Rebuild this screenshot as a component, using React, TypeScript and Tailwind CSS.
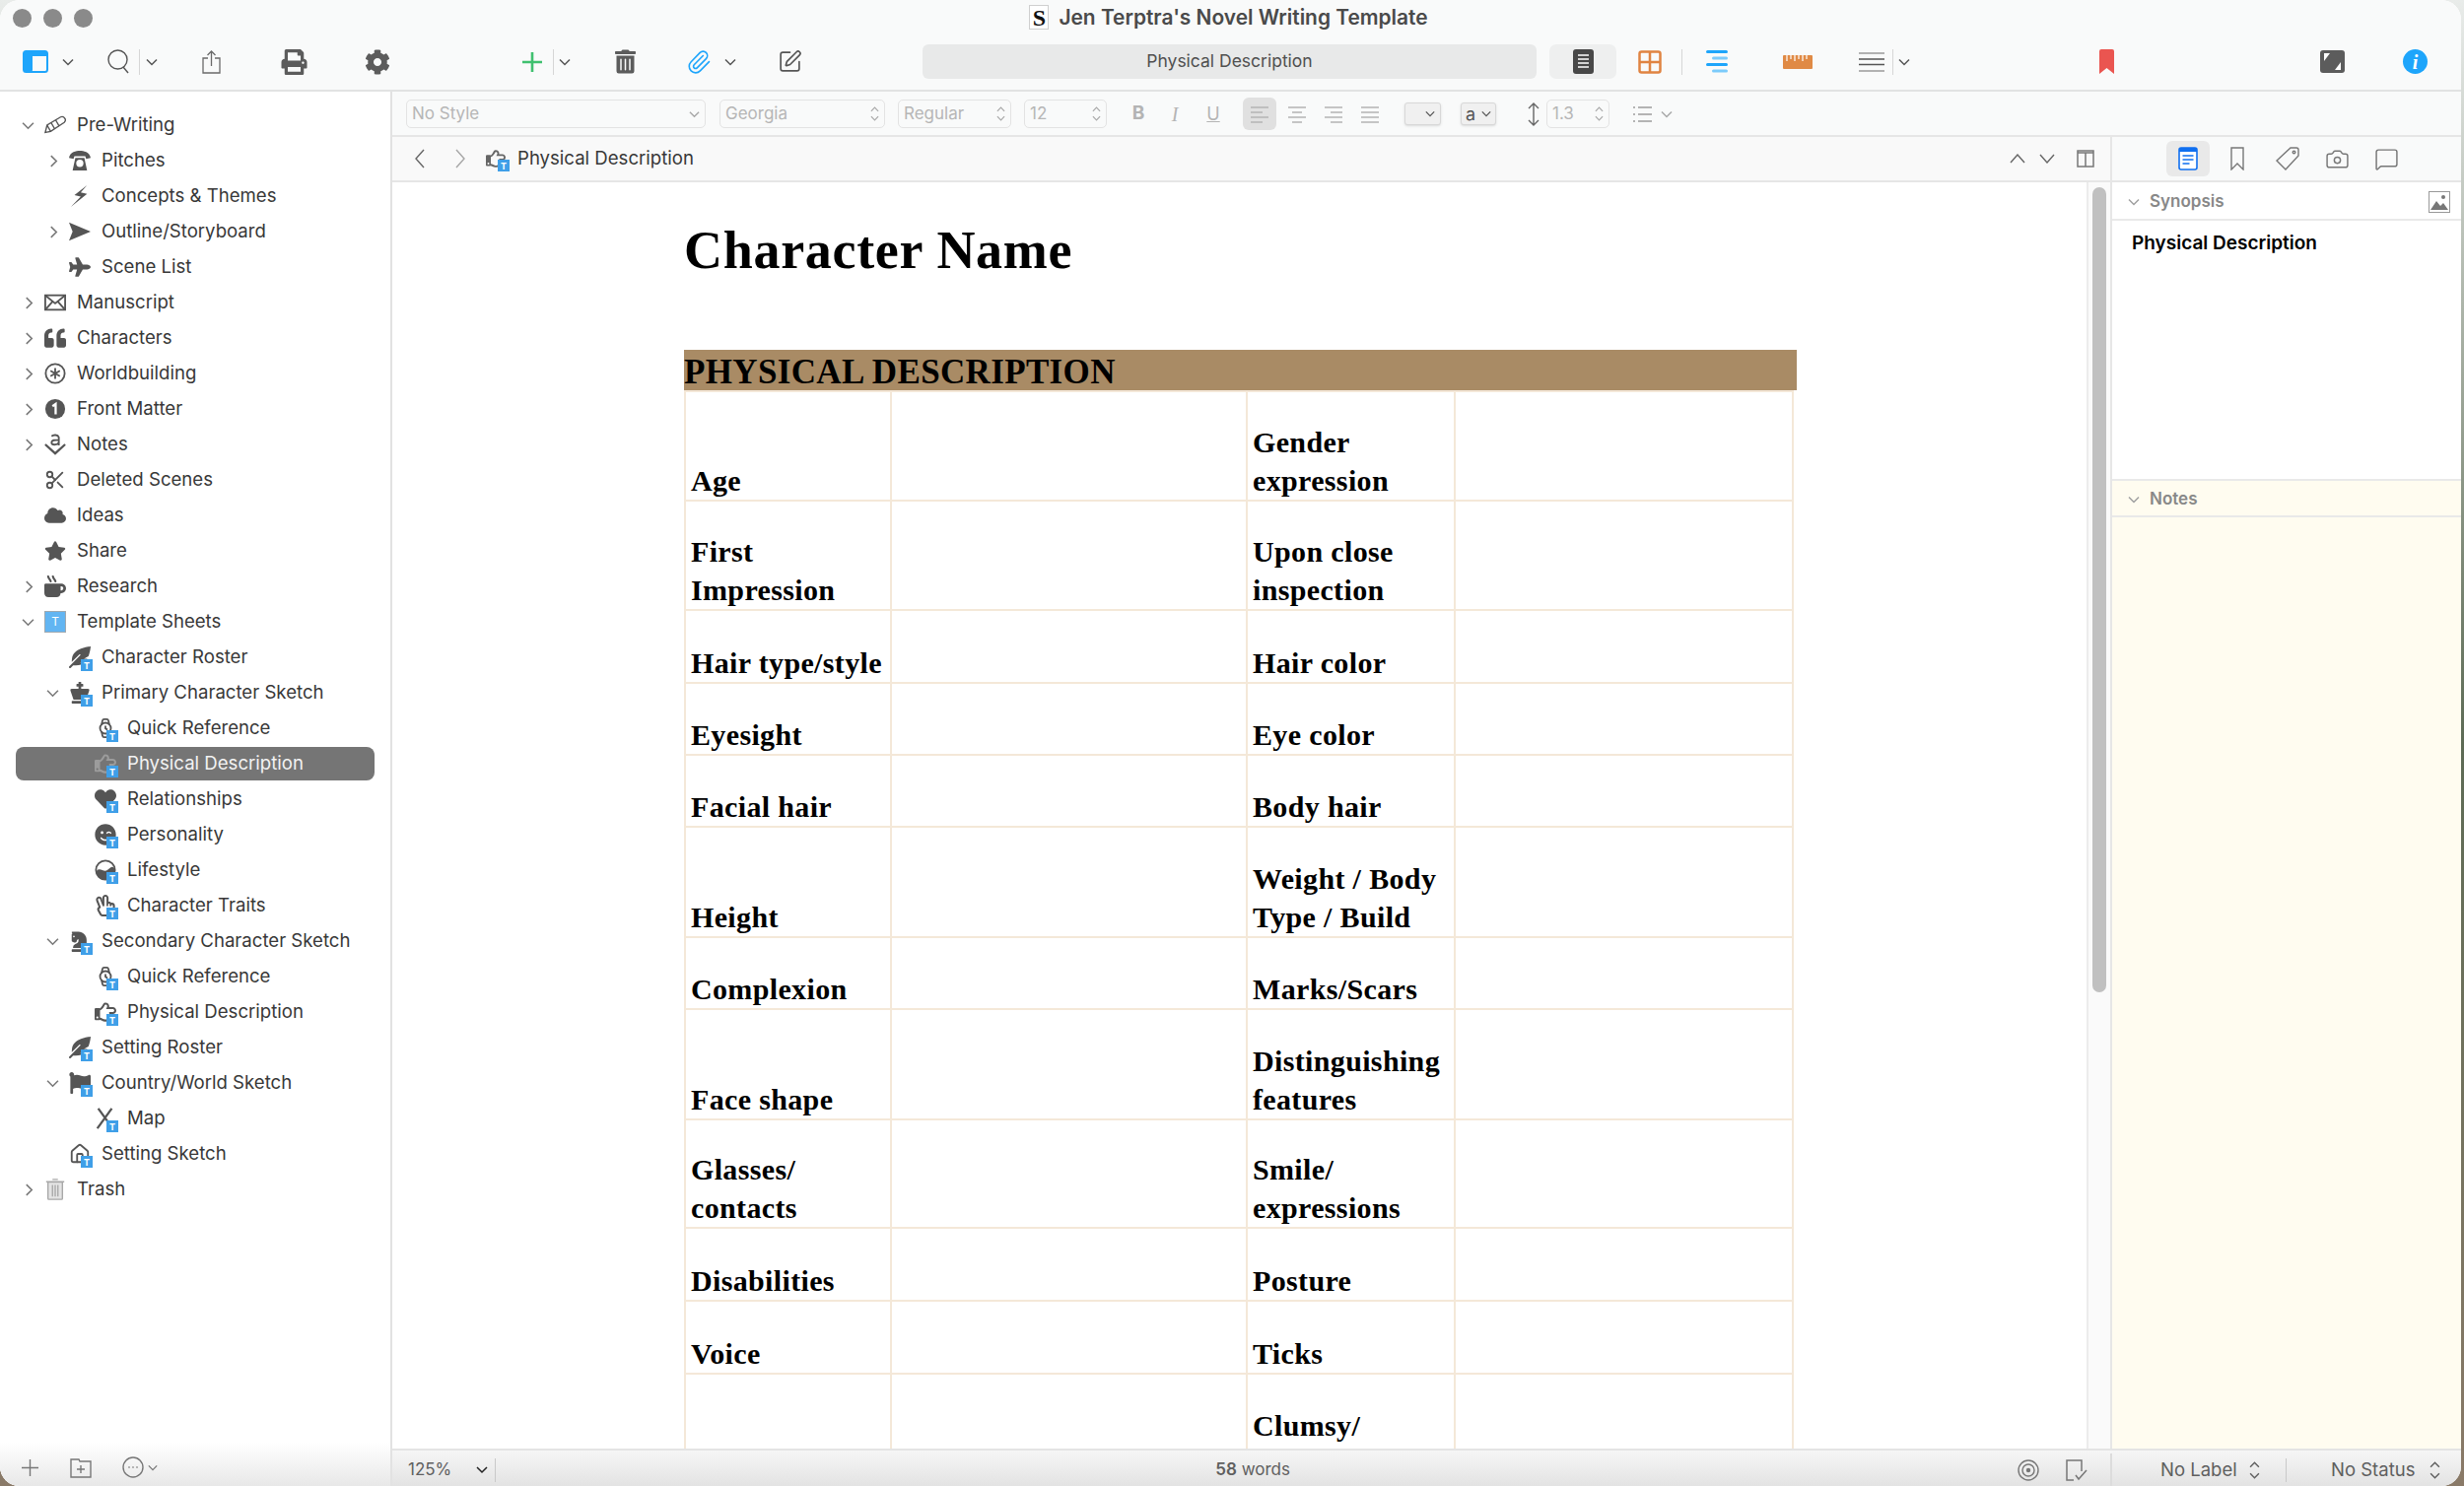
import React from 'react';
import { Scissors, Watch, House, Paperclip, SquarePen, Camera, MessageSquare } from 'lucide-react';
import { FaPlane, FaQuoteLeft, FaCloud, FaStar, FaMugHot, FaFeatherAlt, FaChessKing, FaRegHandPointRight, FaHeart, FaSmileWink, FaRegHandPeace, FaChessKnight, FaFlag, FaPrint, FaCog, FaTrashAlt } from 'react-icons/fa';

type Ic = { className?: string };

const Pencil = ({ className }: Ic) => (
  <svg viewBox="0 0 24 24" className={className} fill="none" stroke="currentColor" strokeWidth="1.500">
    <path d="M1 20l2-8L18 3c2-1 4 0 5 2s0 3-1 4L7 19z" />
    <path d="M3 12l4 7M7.500 9.300l4 7M12.500 6.300l4 7" />
  </svg>
);
const Phone = ({ className }: Ic) => (
  <svg viewBox="0 0 24 24" className={className} fill="currentColor">
    <path d="M0 9C1 2 8 1 12 1s11 1 12 8l-5 1-1-3H6l-1 3z" />
    <path fillRule="evenodd" d="M7 9h10l3 14H4zM12 11a4 4 0 100 8 4 4 0 000-8z" />
  </svg>
);
const Bolt = ({ className }: Ic) => (
  <svg viewBox="0 0 24 24" className={className} fill="currentColor">
    <path d="M20 0L6 11l7 1.500L2 24l18-14.500-7-1.500z" />
  </svg>
);
const Plane = ({ className }: Ic) => (
  <svg viewBox="0 0 24 24" className={className} fill="currentColor">
    <path d="M0 2l24 10L0 22l4-10z" />
  </svg>
);
const Mail = ({ className }: Ic) => (
  <svg viewBox="0 0 24 24" className={className} fill="none" stroke="currentColor" strokeWidth="2">
    <rect x="1" y="4" width="22" height="16" />
    <path d="M1 4l11 9 11-9M1 20l8-9M23 20l-8-9" />
  </svg>
);
const Asterisk = ({ className }: Ic) => (
  <svg viewBox="0 0 24 24" className={className} fill="none" stroke="currentColor" strokeWidth="2">
    <circle cx="12" cy="12" r="10.500" />
    <path d="M12 6v12M6.800 9l10.400 6M17.200 9L6.800 15" />
  </svg>
);
const One = ({ className }: Ic) => (
  <svg viewBox="0 0 24 24" className={className}>
    <circle cx="12" cy="12" r="11" fill="currentColor" />
    <path d="M9 9l3.500-2.500V18" fill="none" stroke="#fff" strokeWidth="2.500" />
  </svg>
);
const NotesA = ({ className }: Ic) => (
  <svg viewBox="0 0 24 24" className={className} fill="none" stroke="currentColor" strokeWidth="2">
    <path d="M8 3c2-2 7-2 8 1v9M16 7c-4 0-8 0-8 3s6 3 8 0" />
    <path d="M1 12l11 10 11-10" strokeWidth="2.500" />
  </svg>
);
const Yin = ({ className }: Ic) => (
  <svg viewBox="0 0 24 24" className={className}>
    <circle cx="12" cy="12" r="10.500" fill="none" stroke="currentColor" strokeWidth="2" />
    <path d="M2 13c4-5 8 2 12-1s5-5 8-2c1 6-4 13-10 13S2 19 2 13z" fill="currentColor" />
  </svg>
);
const MapX = ({ className }: Ic) => (
  <svg viewBox="0 0 24 24" className={className} fill="none" stroke="currentColor" strokeWidth="2.500">
    <path d="M4 1l16 22M19 1L3 23" />
  </svg>
);
const Bin = ({ className }: Ic) => (
  <svg viewBox="0 0 24 24" className={className} fill="none" stroke="#a8a8a8" strokeWidth="1.500">
    <rect x="4" y="4" width="16" height="19" rx="1" fill="#e4e4e4" />
    <path d="M2 3.500h20M9 1h6M9 7v13M12 7v13M15 7v13" />
  </svg>
);

const icons: Record<string, React.FC<Ic>> = {
  pencil: Pencil, phone: Phone, bolt: Bolt, plane: Plane, jet: FaPlane, mail: Mail, quote: FaQuoteLeft, star8: Asterisk,
  one: One, notes: NotesA, cut: Scissors, cloud: FaCloud, star: FaStar, mug: FaMugHot, quill: FaFeatherAlt, king: FaChessKing,
  watch: Watch, hand: FaRegHandPointRight, heart: FaHeart, smile: FaSmileWink, yin: Yin, peace: FaRegHandPeace, knight: FaChessKnight,
  flag: FaFlag, mapx: MapX, house: House, bin: Bin,
};

const Badge = () => (
  <span className="absolute right-[-2px] bottom-[-3px] flex h-[12px] w-[12px] items-center justify-center bg-[#3f9fe8] text-[9px] leading-none font-bold text-white">T</span>
);

// plain chevrons, the lucide ones sit too small in their box
const Down = ({ className }: Ic) => (
  <svg viewBox="0 0 12 8" className={`flex-none ${className ?? ''}`} fill="none" stroke="currentColor" strokeWidth="1.500">
    <path d="M1 1.500l5 5 5-5" />
  </svg>
);
const Right = ({ className }: Ic) => (
  <svg viewBox="0 0 8 12" className={`flex-none ${className ?? ''}`} fill="none" stroke="currentColor" strokeWidth="1.500">
    <path d="M1.500 1l5 5-5 5" />
  </svg>
);
const UpDown = ({ className }: Ic) => (
  <svg viewBox="0 0 10 18" className={`flex-none ${className ?? ''}`} fill="none" stroke="currentColor" strokeWidth="1.300">
    <path d="M1 6l4-4 4 4M1 12l4 4 4-4" />
  </svg>
);

type Row = { label: string; icon: string; level: 0 | 1 | 2; arrow?: 'open' | 'closed'; badge?: boolean; selected?: boolean };

const rows: Row[] = [
  { label: 'Pre-Writing', icon: 'pencil', level: 0, arrow: 'open' },
  { label: 'Pitches', icon: 'phone', level: 1, arrow: 'closed' },
  { label: 'Concepts & Themes', icon: 'bolt', level: 1 },
  { label: 'Outline/Storyboard', icon: 'plane', level: 1, arrow: 'closed' },
  { label: 'Scene List', icon: 'jet', level: 1 },
  { label: 'Manuscript', icon: 'mail', level: 0, arrow: 'closed' },
  { label: 'Characters', icon: 'quote', level: 0, arrow: 'closed' },
  { label: 'Worldbuilding', icon: 'star8', level: 0, arrow: 'closed' },
  { label: 'Front Matter', icon: 'one', level: 0, arrow: 'closed' },
  { label: 'Notes', icon: 'notes', level: 0, arrow: 'closed' },
  { label: 'Deleted Scenes', icon: 'cut', level: 0 },
  { label: 'Ideas', icon: 'cloud', level: 0 },
  { label: 'Share', icon: 'star', level: 0 },
  { label: 'Research', icon: 'mug', level: 0, arrow: 'closed' },
  { label: 'Template Sheets', icon: 'template', level: 0, arrow: 'open' },
  { label: 'Character Roster', icon: 'quill', level: 1, badge: true },
  { label: 'Primary Character Sketch', icon: 'king', level: 1, arrow: 'open', badge: true },
  { label: 'Quick Reference', icon: 'watch', level: 2, badge: true },
  { label: 'Physical Description', icon: 'hand', level: 2, badge: true, selected: true },
  { label: 'Relationships', icon: 'heart', level: 2, badge: true },
  { label: 'Personality', icon: 'smile', level: 2, badge: true },
  { label: 'Lifestyle', icon: 'yin', level: 2, badge: true },
  { label: 'Character Traits', icon: 'peace', level: 2, badge: true },
  { label: 'Secondary Character Sketch', icon: 'knight', level: 1, arrow: 'open', badge: true },
  { label: 'Quick Reference', icon: 'watch', level: 2, badge: true },
  { label: 'Physical Description', icon: 'hand', level: 2, badge: true },
  { label: 'Setting Roster', icon: 'quill', level: 1, badge: true },
  { label: 'Country/World Sketch', icon: 'flag', level: 1, arrow: 'open', badge: true },
  { label: 'Map', icon: 'mapx', level: 2, badge: true },
  { label: 'Setting Sketch', icon: 'house', level: 1, badge: true },
  { label: 'Trash', icon: 'bin', level: 0, arrow: 'closed' },
];

const indent = ['pl-[22px]', 'pl-[47px]', 'pl-[71px]'];

const BinderRow = ({ row }: { row: Row }) => {
  const Icon = icons[row.icon];
  return (
    <div className={`relative flex h-9 items-center ${indent[row.level]}`}>
      {row.selected && <div className="absolute top-[1px] right-[16px] bottom-[1px] left-[16px] rounded-[8px] bg-[#757575]" />}
      <div className={`relative text-[#7a7a7a] ${row.level === 2 ? 'w-[25px]' : 'w-[23px]'}`}>
        {row.arrow === 'open' && <Down className="h-[9px] w-[13px]" />}
        {row.arrow === 'closed' && <Right className="ml-[3px] h-[13px] w-[9px]" />}
      </div>
      <div className="relative w-[33px]">
        {row.icon === 'template' ? (
          <span className="flex h-[22px] w-[22px] items-center justify-center border border-[#9fa9b0] bg-[#62b5f2] text-[12px] leading-none text-white">T</span>
        ) : (
          <span className={`relative block h-[22px] w-[22px] ${row.selected ? 'text-[#9c9c9c]' : 'text-[#555555]'}`}>
            <Icon className="h-[22px] w-[22px]" />
            {row.badge && <Badge />}
          </span>
        )}
      </div>
      <span className={`relative text-[18.600px] whitespace-nowrap ${row.selected ? 'text-[#f2f2f2]' : 'text-[#383838]'}`}>{row.label}</span>
    </div>
  );
};

const Chev = ({ className }: Ic) => <Down className={`h-[8px] w-[12px] text-[#555555] ${className ?? ''}`} />;
const Divider = ({ className }: Ic) => <div className={`h-[26px] w-px flex-none bg-[#d6d6d6] ${className ?? ''}`} />;

const TopBar = () => (
  <div className="h-[93px] flex-none border-b-2 border-[#e2e3e3] bg-[#f9fafa]">
    <div className="relative flex h-9 items-center justify-center">
      <div className="absolute top-[9px] left-[13px] flex gap-[12px]">
        <span className="h-[19px] w-[19px] rounded-full bg-[#8a8a8a]" />
        <span className="h-[19px] w-[19px] rounded-full bg-[#8a8a8a]" />
        <span className="h-[19px] w-[19px] rounded-full bg-[#8a8a8a]" />
      </div>
      <div className="flex items-center gap-[10px] pr-[4px]">
        <div className="flex h-[25px] w-[20px] items-center justify-center border border-[#cfcfcf] bg-white font-['Liberation_Serif',serif] text-[24px] leading-none font-bold text-[#111111]">S</div>
        <span className="text-[20.900px] font-semibold text-[#4a4a4a]">Jen Terptra's Novel Writing Template</span>
      </div>
    </div>
    <div className="flex h-[52px] items-center pt-[1px] pl-[23px]">
      <svg viewBox="0 0 26 23" className="h-[23px] w-[26px] flex-none">
        <rect x="1" y="1" width="24" height="21" rx="2.500" fill="none" stroke="#1ea5fb" strokeWidth="2" />
        <path d="M1 3.500a2.500 2.500 0 012.500-2.500h19a2.500 2.500 0 012.500 2.500V6H1z" fill="#1ea5fb" />
        <rect x="1" y="1" width="9" height="21" rx="2" fill="#1ea5fb" />
      </svg>
      <Chev className="ml-[14px]" />
      <svg viewBox="0 0 23 25" className="ml-[34px] h-[25px] w-[23px] flex-none" fill="none" stroke="#555555" strokeWidth="1.400">
        <circle cx="10.500" cy="10.500" r="9.500" />
        <path d="M16 18l5 6" />
      </svg>
      <Divider className="ml-[9px]" />
      <Chev className="ml-[6px]" />
      <svg viewBox="0 0 19 24" className="ml-[45px] h-[24px] w-[19px] flex-none" fill="none" stroke="#6a6a6a" strokeWidth="1.300">
        <path d="M6 8H1v15h17V8h-5M9.500 16V1M5.500 5l4-4 4 4" />
      </svg>
      <FaPrint className="ml-[61px] h-[26px] w-[27px] flex-none text-[#5c5c5c]" />
      <FaCog className="ml-[58px] h-[26px] w-[26px] flex-none text-[#5c5c5c]" />
      <svg viewBox="0 0 20 20" className="ml-[134px] h-[20px] w-[20px] flex-none" fill="none" stroke="#3fc06f" strokeWidth="2.600">
        <path d="M10 0v20M0 10h20" />
      </svg>
      <Divider className="ml-[11px]" />
      <Chev className="ml-[5px]" />
      <FaTrashAlt className="ml-[45px] h-[25px] w-[21px] flex-none text-[#5c5c5c]" />
      <Paperclip size={26} strokeWidth={1.5} className="ml-[51px] flex-none text-[#1ea5fb]" />
      <Chev className="ml-[13px]" />
      <SquarePen size={25} strokeWidth={1.6} className="ml-[42px] flex-none text-[#555555]" />
      <div className="ml-[122px] flex h-[35px] w-[623px] flex-none items-center justify-center rounded-[6px] bg-[#e8e9e9] text-[17.500px] text-[#505050]">Physical Description</div>
      <div className="ml-[13px] flex h-[35px] w-[68px] flex-none items-center justify-center rounded-[7px] bg-[#eeefef]">
        <svg viewBox="0 0 21 25" className="h-[25px] w-[21px]">
          <rect width="21" height="25" rx="3" fill="#484848" />
          <path d="M5 6h11M5 10h11M5 14h11M5 18h11" stroke="#fff" strokeWidth="1.500" />
        </svg>
      </div>
      <svg viewBox="0 0 24 24" className="ml-[22px] h-[24px] w-[24px] flex-none" fill="none" stroke="#e08442" strokeWidth="2.500">
        <rect x="1.500" y="1.500" width="21" height="21" rx="2" />
        <path d="M12 1.500v21M1.500 12h21" />
      </svg>
      <Divider className="ml-[20px]" />
      <svg viewBox="0 0 22 25" className="ml-[24px] h-[25px] w-[22px] flex-none">
        <rect x="0" y="1" width="22" height="3" rx="1.500" fill="#1ea5fb" />
        <rect x="6" y="7.500" width="16" height="3" rx="1.500" fill="#7ccbfb" />
        <rect x="0" y="14" width="22" height="3" rx="1.500" fill="#1ea5fb" />
        <rect x="6" y="20.500" width="16" height="3" rx="1.500" fill="#7ccbfb" />
      </svg>
      <svg viewBox="0 0 30 14" className="ml-[56px] h-[14px] w-[30px] flex-none">
        <rect width="30" height="14" rx="1" fill="#e08a45" />
        <path d="M4 0v6M8 0v4M12 0v6M16 0v4M20 0v6M24 0v4" stroke="#fff" strokeWidth="1.200" />
      </svg>
      <svg viewBox="0 0 28 20" className="ml-[46px] h-[20px] w-[28px] flex-none">
        <path d="M1 1h26M1 19h26" stroke="#9a9a9a" strokeWidth="1.500" />
        <path d="M1 7h26M1 12.500h26" stroke="#555555" strokeWidth="1.500" />
      </svg>
      <Divider className="ml-[7px]" />
      <Chev className="ml-[5px]" />
      <svg viewBox="0 0 15 25" className="ml-[192px] h-[25px] w-[15px] flex-none">
        <path d="M0 2a2 2 0 012-2h11a2 2 0 012 2v23l-7.500-6L0 25z" fill="#ea5550" />
      </svg>
      <svg viewBox="0 0 25 23" className="ml-[209px] h-[23px] w-[25px] flex-none">
        <rect width="25" height="23" rx="3" fill="#5c5c5c" />
        <path d="M4 3h6l-6 8zM21 20h-6l6-8z" fill="#fff" />
      </svg>
      <div className="ml-[59px] flex h-[25px] w-[25px] flex-none items-center justify-center rounded-full bg-[#1ea5fb] font-['Liberation_Serif',serif] text-[20px] leading-none font-bold text-white italic">i</div>
    </div>
  </div>
);

const Sel = ({ label, className, arrows }: { label: string; className: string; arrows?: boolean }) => (
  <div className={`flex h-[29px] flex-none items-center justify-between rounded-[5px] border border-[#e3e3e3] px-[5px] text-[17px] text-[#b6b6b6] ${className}`}>
    <span>{label}</span>
    {arrows ? <UpDown className="h-[17px] w-[9px] text-[#a8a8a8]" /> : <Down className="h-[8px] w-[11px] text-[#a8a8a8]" />}
  </div>
);

const Align = ({ d, className }: { d: string; className?: string }) => (
  <svg viewBox="0 0 20 18" className={`h-[18px] w-[20px] flex-none ${className ?? ''}`} fill="none" stroke="#b4b4b4" strokeWidth="1.500">
    <path d={d} />
  </svg>
);

const FormatBar = () => (
  <div className="flex h-[46px] flex-none items-center border-b-2 border-[#e6e6e6] bg-[#f9fafa] pt-[1px] pl-[14px]">
    <Sel label="No Style" className="w-[304px]" />
    <Sel label="Georgia" arrows className="ml-[14px] w-[168px]" />
    <Sel label="Regular" arrows className="ml-[13px] w-[115px]" />
    <Sel label="12" arrows className="ml-[13px] w-[84px]" />
    <span className="ml-[24px] w-[16px] flex-none text-center text-[19px] font-bold text-[#b4b4b4]">B</span>
    <span className="ml-[21px] w-[16px] flex-none text-center font-['Liberation_Serif',serif] text-[20px] text-[#b4b4b4] italic">I</span>
    <span className="ml-[23px] w-[16px] flex-none text-center text-[18px] text-[#b4b4b4] underline">U</span>
    <div className="ml-[22px] flex h-[33px] w-[34px] flex-none items-center justify-center rounded-[6px] bg-[#e0e0e0]">
      <Align d="M1 2h18M1 7h12M1 12h18M1 17h12" />
    </div>
    <Align d="M1 2h18M5 7h10M1 12h18M5 17h10" className="ml-[11px]" />
    <Align d="M1 2h18M7 7h12M1 12h18M7 17h12" className="ml-[17px]" />
    <Align d="M1 2h18M1 7h18M1 12h18M1 17h18" className="ml-[17px]" />
    <div className="ml-[25px] flex h-[23px] w-[37px] flex-none items-center justify-end rounded-[3px] border border-[#d8d8d8] bg-[#f0f0f0] pr-[5px] text-[#555555] shadow-sm">
      <Down className="h-[7px] w-[10px]" />
    </div>
    <div className="ml-[20px] flex h-[23px] w-[36px] flex-none items-center justify-between rounded-[3px] border border-[#d8d8d8] bg-[#f0f0f0] px-[4px] text-[18px] text-[#555555] shadow-sm">
      <span>a</span>
      <Down className="h-[7px] w-[10px]" />
    </div>
    <svg viewBox="0 0 12 24" className="ml-[32px] h-[24px] w-[12px] flex-none" fill="none" stroke="#666666" strokeWidth="1.400">
      <path d="M6 1v22M1 6l5-5 5 5M1 18l5 5 5-5" />
    </svg>
    <Sel label="1.3" arrows className="ml-[7px] w-[64px]" />
    <svg viewBox="0 0 20 18" className="ml-[23px] h-[18px] w-[20px] flex-none" fill="none" stroke="#b4b4b4" strokeWidth="1.800">
      <path d="M6 2h14M6 9h14M6 16h14M1 2h2M1 9h2M1 16h2" />
    </svg>
    <Down className="ml-[9px] h-[8px] w-[12px] text-[#a8a8a8]" />
  </div>
);

type TableRow = { h: string; left: React.ReactNode; right: React.ReactNode };

const tableRows: TableRow[] = [
  { h: 'h-[111px]', left: 'Age', right: <>Gender<br />expression</> },
  { h: 'h-[111px]', left: <>First<br />Impression</>, right: <>Upon close<br />inspection</> },
  { h: 'h-[74px]', left: 'Hair type/style', right: 'Hair color' },
  { h: 'h-[73px]', left: 'Eyesight', right: 'Eye color' },
  { h: 'h-[73px]', left: 'Facial hair', right: 'Body hair' },
  { h: 'h-[112px]', left: 'Height', right: <>Weight / Body<br />Type / Build</> },
  { h: 'h-[73px]', left: 'Complexion', right: 'Marks/Scars' },
  { h: 'h-[112px]', left: 'Face shape', right: <>Distinguishing<br />features</> },
  { h: 'h-[110px]', left: <>Glasses/<br />contacts</>, right: <>Smile/<br />expressions</> },
  { h: 'h-[74px]', left: 'Disabilities', right: 'Posture' },
  { h: 'h-[74px]', left: 'Voice', right: 'Ticks' },
  { h: 'h-[112px]', left: '', right: <>Clumsy/<br />&nbsp;</> },
];

const cell = 'border-2 border-[#f4e8d8] px-[5px] align-bottom';

const Editor = () => (
  <div className="relative min-h-0 flex-1 overflow-hidden bg-white pl-[296px] font-['Liberation_Serif',serif] font-bold text-black">
    <h1 className="mt-[37px] text-[54px] leading-[64px] tracking-[0.7px]">Character Name</h1>
    <div className="mt-[69px] h-[41px] w-[1129px] bg-[#a98b65] text-[35px] leading-[46px] tracking-[0.35px] overflow-hidden">PHYSICAL DESCRIPTION</div>
    <table className="w-[1124px] table-fixed border-collapse text-[30px] leading-[38.500px] tracking-[0.35px]">
      <colgroup>
        <col className="w-[209px]" />
        <col className="w-[361px]" />
        <col className="w-[211px]" />
        <col className="w-[343px]" />
      </colgroup>
      <tbody>
        {tableRows.map((r, i) => (
          <tr key={i} className={r.h}>
            <td className={cell}>{r.left}</td>
            <td className={cell} />
            <td className={cell}>{r.right}</td>
            <td className={cell} />
          </tr>
        ))}
      </tbody>
    </table>
    <div className="absolute top-0 right-0 bottom-0 w-[24px] border-l-2 border-[#ececec] bg-[#fafafa] pt-[5px] pl-[4px]">
      <div className="h-[817px] w-[14px] rounded-full bg-[#c0c0c0]" />
    </div>
  </div>
);

const Inspector = () => (
  <div className="flex w-[356px] flex-none flex-col border-l-2 border-[#e6e6e6] bg-white">
    <div className="flex h-[46px] flex-none items-center border-b-2 border-[#e6e6e6] bg-[#f9fafa]">
      <div className="ml-[55px] flex h-[36px] w-[44px] items-center justify-center rounded-[6px] bg-[#e9e9e9]">
        <svg viewBox="0 0 20 24" className="h-[24px] w-[20px]">
          <rect x="1" y="1" width="18" height="22" rx="2" fill="#fff" stroke="#0f6ff0" strokeWidth="1.600" />
          <path d="M1 3a2 2 0 012-2h14a2 2 0 012 2v2H1z" fill="#0f6ff0" />
          <path d="M4.500 9h11M4.500 13h11M4.500 17h7" stroke="#0f6ff0" strokeWidth="1.500" />
        </svg>
      </div>
      <svg viewBox="0 0 14 24" className="ml-[21px] h-[24px] w-[14px] flex-none" fill="none" stroke="#777777" strokeWidth="1.400">
        <path d="M1 1h12v22l-6-6-6 6z" />
      </svg>
      <svg viewBox="0 0 24 24" className="ml-[32px] h-[24px] w-[24px] flex-none" fill="none" stroke="#777777" strokeWidth="1.400">
        <path d="M15 1h6a2 2 0 012 2v6L10 23 1 14z" />
        <circle cx="18.500" cy="5.500" r="1.300" />
      </svg>
      <Camera size={25} strokeWidth={1.4} className="ml-[26px] text-[#777777]" />
      <MessageSquare size={25} strokeWidth={1.4} className="ml-[25px] text-[#777777]" />
    </div>
    <div className="flex h-[39px] flex-none items-center border-b-2 border-[#e9e9e9] pt-[3px] pl-[16px]">
      <Down className="h-[8px] w-[12px] text-[#a0a0a0]" />
      <span className="ml-[10px] text-[17px] font-semibold text-[#888888]">Synopsis</span>
      <svg viewBox="0 0 22 22" className="mr-[11px] ml-auto h-[22px] w-[22px]">
        <rect x="0.500" y="0.500" width="21" height="21" fill="#fff" stroke="#999999" />
        <path d="M2 19l6-9 4 5 3-3 5 7z" fill="#777777" />
        <circle cx="15" cy="6" r="2" fill="#777777" />
      </svg>
    </div>
    <div className="h-[262px] flex-none pt-[9px] pl-[20px] text-[19px] font-semibold text-black">Physical Description</div>
    <div className="flex h-[39px] flex-none items-center border-y-2 border-[#e9e9e9] bg-[#fffcf0] pt-[3px] pl-[16px]">
      <Down className="h-[8px] w-[12px] text-[#a0a0a0]" />
      <span className="ml-[10px] text-[17px] font-semibold text-[#888888]">Notes</span>
    </div>
    <div className="flex-1 bg-[#fffcf0]" />
  </div>
);

const Footer = () => (
  <div className="flex h-[38px] flex-none items-center border-t-2 border-[#e4e4e4] bg-gradient-to-b from-[#f6f6f6] to-[#e3e3e3] pt-[3px] text-[17px] text-[#5f5f5f]">
    <div className="flex h-full w-[1743px] flex-none items-center pl-[16px]">
      <span>125%</span>
      <Down className="ml-[25px] h-[9px] w-[12px] text-[#222222]" />
      <div className="ml-[7px] h-[24px] w-px bg-[#c9c9c9]" />
      <span className="ml-[730px]"><b className="font-semibold">58</b> words</span>
      <svg viewBox="0 0 22 22" className="ml-[738px] h-[22px] w-[22px] flex-none" fill="none" stroke="#777777" strokeWidth="1.400">
        <circle cx="11" cy="11" r="10" />
        <circle cx="11" cy="11" r="6" />
        <circle cx="11" cy="11" r="1.500" fill="#777777" />
      </svg>
      <svg viewBox="0 0 22 22" className="ml-[27px] h-[22px] w-[22px] flex-none" fill="none" stroke="#777777" strokeWidth="1.500">
        <path d="M8 21H1V1h15v11M10 16l3 4 8-9" />
      </svg>
    </div>
    <div className="flex h-full flex-1 items-center border-l-2 border-[#dcdcdc] pl-[49px] text-[18.500px]">
      <span className="w-[76px] whitespace-nowrap">No Label</span>
      <UpDown className="ml-[14px] h-[20px] w-[11px]" />
      <div className="ml-[26px] h-[24px] w-px bg-[#c9c9c9]" />
      <span className="ml-[45px] w-[86px] whitespace-nowrap">No Status</span>
      <UpDown className="ml-[14px] h-[20px] w-[11px]" />
    </div>
  </div>
);

const App: React.FC = () => {
  return (
    <div className="h-[1508px] w-[2500px] overflow-hidden bg-gradient-to-b from-[#e9ecea] via-[#5d6b55] to-[#8a7a68] pr-[3px] font-[Inter,sans-serif]">
      <div className="flex h-full flex-col overflow-hidden rounded-[20px] bg-white">
        <TopBar />
        <div className="flex min-h-0 flex-1">
          <aside className="flex w-[398px] flex-none flex-col border-r-2 border-[#e2e2e2] bg-white">
            <div className="flex-1 pt-[16px]">
              {rows.map((r, i) => <BinderRow key={i} row={r} />)}
            </div>
            <div className="flex h-[44px] flex-none items-center bg-gradient-to-b from-white to-[#e8e8e8] pt-[6px] pl-[22px] text-[#777777]">
              <svg viewBox="0 0 17 17" className="h-[17px] w-[17px]" fill="none" stroke="#777777" strokeWidth="1.400">
                <path d="M8.500 0v17M0 8.500h17" />
              </svg>
              <svg viewBox="0 0 22 22" className="ml-[32px] h-[22px] w-[22px]" fill="none" stroke="#777777" strokeWidth="1.400">
                <path d="M1 21V3h8l1 2h11v16zM11 9v8M7 13h8" />
              </svg>
              <svg viewBox="0 0 22 22" className="ml-[31px] h-[22px] w-[22px]" fill="none" stroke="#777777" strokeWidth="1.400">
                <circle cx="11" cy="11" r="10" />
                <path d="M6.500 11h1M10.500 11h1M14.500 11h1" strokeWidth="1.800" />
              </svg>
              <Down className="ml-[4px] h-[7px] w-[10px]" />
            </div>
          </aside>
          <main className="flex min-w-0 flex-1 flex-col">
            <FormatBar />
            <div className="flex min-h-0 flex-1">
              <div className="flex min-w-0 flex-1 flex-col">
                <div className="flex h-[46px] flex-none items-center border-b-2 border-[#e6e6e6] bg-[#f9f9f9]">
                  <svg viewBox="0 0 10 20" className="ml-[23px] h-[20px] w-[10px] flex-none" fill="none" stroke="#666666" strokeWidth="1.400">
                    <path d="M9 1L1 10l8 9" />
                  </svg>
                  <svg viewBox="0 0 10 20" className="ml-[31px] h-[20px] w-[10px] flex-none" fill="none" stroke="#a6a6a6" strokeWidth="1.400">
                    <path d="M1 1l8 9-8 9" />
                  </svg>
                  <span className="relative ml-[21px] block h-[20px] w-[22px] text-[#666666]">
                    <FaRegHandPointRight className="h-[20px] w-[20px]" />
                    <Badge />
                  </span>
                  <span className="ml-[10px] text-[18.600px] text-[#383838]">Physical Description</span>
                  <svg viewBox="0 0 16 10" className="ml-auto h-[10px] w-[16px] flex-none" fill="none" stroke="#666666" strokeWidth="1.400">
                    <path d="M1 9l7-8 7 8" />
                  </svg>
                  <svg viewBox="0 0 16 10" className="ml-[14px] h-[10px] w-[16px] flex-none" fill="none" stroke="#666666" strokeWidth="1.400">
                    <path d="M1 1l7 8 7-8" />
                  </svg>
                  <svg viewBox="0 0 18 18" className="mr-[16px] ml-[22px] h-[18px] w-[18px]" fill="none" stroke="#777777" strokeWidth="1.500">
                    <rect x="1" y="1" width="16" height="16" />
                    <path d="M9 3v14M1 3h16" />
                  </svg>
                </div>
                <Editor />
              </div>
              <Inspector />
            </div>
            <Footer />
          </main>
        </div>
      </div>
    </div>
  );
};

export default App;
